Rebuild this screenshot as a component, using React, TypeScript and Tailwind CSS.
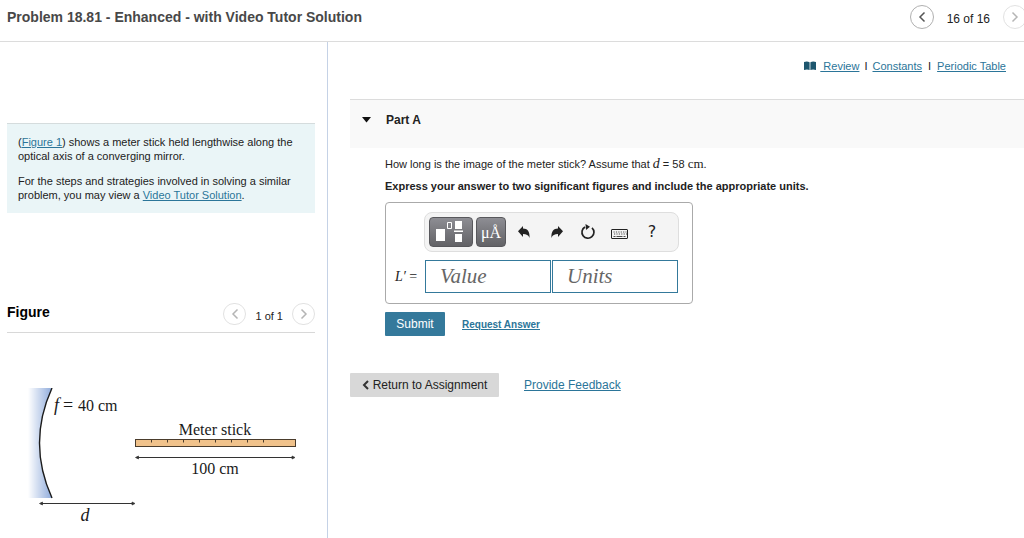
import * as React from "react";
import { clsx } from "clsx";

const SERIF = "font-['Liberation_Serif',serif]";
const LINK = "text-[#2b7599] underline underline-offset-1";

interface PagerProps {
  label: string;
  small?: boolean;
  prevDisabled?: boolean;
  className?: string;
}

interface RoundButtonProps {
  direction: "prev" | "next";
  label: string;
  small?: boolean;
  disabled?: boolean;
}

/** Round arrow button used by both pagers. */
function RoundButton({ direction, label, small, disabled }: RoundButtonProps) {
  return (
    <button
      type="button"
      aria-label={label}
      disabled={disabled}
      className={clsx(
        "flex shrink-0 items-center justify-center rounded-full border bg-white",
        small ? "h-[22px] w-[23px]" : "h-6 w-6",
        disabled ? "border-[#e2e2e2] text-[#b5b5b5]" : "border-[#b0b0b0] text-[#555]",
      )}
    >
      <svg width="8" height="12" viewBox="0 0 8 12" fill="none" stroke="currentColor" strokeWidth="1.5">
        <path d={direction === "prev" ? "M6.500 1.500 2 6l4.500 4.500" : "M1.500 1.500 6 6l-4.500 4.500"} />
      </svg>
    </button>
  );
}

function Pager({ label, small, prevDisabled, className }: PagerProps) {
  return (
    <div
      className={clsx(
        "flex shrink-0 items-center text-[#222]",
        small ? "text-[11px] leading-4" : "text-xs",
        className,
      )}
    >
      <RoundButton direction="prev" label="Previous" small={small} disabled={prevDisabled} />
      <span className="pt-1 whitespace-nowrap">{label}</span>
      <RoundButton direction="next" label="Next" small={small} disabled />
    </div>
  );
}

function BookIcon() {
  return (
    <svg width="12" height="10" viewBox="0 0 12 10" className="fill-[#1d566e]" aria-hidden="true">
      <path d="M0 1c2-.8 4-.7 5.600.2V9C4 8.200 2 8.200 0 9zM12 1c-2-.8-4-.7-5.600.2V9C8 8.200 10 8.200 12 9z" />
    </svg>
  );
}

/** Concave mirror, meter stick and the two dimension arrows. */
function MirrorFigure() {
  const ticks = [150, 166, 182, 198, 214, 230, 246, 262];
  return (
    <svg viewBox="0 0 308 140" className="w-full" role="img" aria-label="Converging mirror and meter stick">
      <defs>
        <linearGradient id="mirror" x1="0" x2="1" y1="0" y2="0">
          <stop offset="0" stopColor="#fff" />
          <stop offset="1" stopColor="#8fabdb" />
        </linearGradient>
      </defs>
      <path d="M21 0H45Q20 55 45 110H21Z" fill="url(#mirror)" />
      <path d="M45 0Q20 55 45 110" fill="none" stroke="#1c1c1c" strokeWidth="1.4" />

      <rect x="128.500" y="51.500" width="160" height="7" fill="#f0c28b" stroke="#4a3c2c" />
      {ticks.map((x) => (
        <path key={x} d={`M${x - 5.5} 52v2.500`} stroke="#4a3c2c" />
      ))}

      <g stroke="#333" fill="#333">
        <path d="M131 69.500H286M35 115.500H126" />
        <path
          d="M128.500 69.500l3-1.500v3zM288 69.500l-3-1.500v3zM32.500 115.500l3-1.500v3zM128 115.500l-3-1.500v3z"
          strokeWidth="0.700"
        />
      </g>

      <g className={clsx(SERIF, "fill-[#1a1a1a] text-[16px]")}>
        <text x="47" y="23" fontStyle="italic" className="text-[18px]">f</text>
        <text x="56" y="23" className="text-[18px]">=</text>
        <text x="71" y="23">40 cm</text>
        <text x="208" y="47" textAnchor="middle">Meter stick</text>
        <text x="208" y="86" textAnchor="middle">100 cm</text>
        <text x="78" y="133" textAnchor="middle" fontStyle="italic" className="text-[18px]">d</text>
      </g>
    </svg>
  );
}

function LeftPane() {
  return (
    <aside className="flex w-[328px] shrink-0 flex-col border-r border-[#c5d2e6] pt-[81px] pr-3 pl-[7px]">
      <section className="space-y-[11px] border-t border-[#d5dcdd] bg-[#eaf5f7] py-[11px] pr-2 pl-[11px] text-[11px] leading-[14px]">
        <p>
          (<a href="#figure" className={LINK}>Figure 1</a>) shows a meter stick held lengthwise along the
          optical axis of a converging mirror.
        </p>
        <p>
          For the steps and strategies involved in solving a similar problem, you may view a{" "}
          <a href="#video" className={LINK}>Video Tutor Solution</a>.
        </p>
      </section>

      <section id="figure" className="pt-[89px]">
        <div className="flex items-center justify-between border-b border-[#d8d8d8] pb-[6px]">
          <h2 className="pb-1 text-sm leading-5 font-bold text-black">Figure</h2>
          <Pager label="1 of 1" small prevDisabled className="gap-[9px]" />
        </div>
        <div className="pt-[55px]">
          <MirrorFigure />
        </div>
      </section>
    </aside>
  );
}

const TOOL = "flex h-8 w-8 items-center justify-center text-[#222]";
const DARK_TOOL =
  "flex h-[30px] items-center justify-center rounded-[4px] border border-[#58585c] bg-linear-to-b from-[#8e8e94] to-[#626266] text-white";

function Toolbar() {
  return (
    <div className="flex h-10 w-[255px] items-center rounded-lg border border-[#dedede] bg-[#f4f4f4] pl-1">
      <button type="button" aria-label="Templates" className={clsx(DARK_TOOL, "w-11")}>
        <svg width="30" height="22" viewBox="0 0 30 22" fill="#fff">
          <path d="M0 8h9v12H0zM19 0h7v8h-7zM18 9.500h9v1.500h-9zM19 13h7v8h-7z" />
          <path d="M11.500 1.500h4v6h-4z" fill="none" stroke="#fff" />
        </svg>
      </button>
      <button
        type="button"
        aria-label="Units"
        className={clsx(DARK_TOOL, SERIF, "ml-[3px] w-[30px] pt-0.5 text-base")}
      >
        μÅ
      </button>
      <div className="ml-0.5 flex">
        <button type="button" aria-label="Undo" className={TOOL}>
          <svg width="12" height="12" viewBox="0 0 12 12" fill="currentColor">
            <path d="M5 0v2.500c4.500 0 7 3 6.500 9.500C10.500 9 8.500 8 5 8v3L0 5.200z" />
          </svg>
        </button>
        <button type="button" aria-label="Redo" className={clsx(TOOL, "pl-0.5")}>
          <svg width="12" height="12" viewBox="0 0 12 12" fill="currentColor">
            <path d="M7 0v2.500C2.500 2.500 0 5.500.500 12 1.500 9 3.500 8 7 8v3l5-5.800z" />
          </svg>
        </button>
        <button type="button" aria-label="Reset" className={TOOL}>
          <svg width="16" height="16" viewBox="0 0 16 16">
            <path d="M12 3.800A6 6 0 1 1 5 3" fill="none" stroke="currentColor" strokeWidth="1.700" />
            <path d="M5.500 0l4.500 2.800L6 6z" fill="currentColor" />
          </svg>
        </button>
        <button type="button" aria-label="Keyboard shortcuts" className={clsx(TOOL, "pt-1")}>
          <svg width="18" height="12" viewBox="0 0 18 12" fill="none" stroke="currentColor">
            <rect x="0.500" y="1.500" width="16" height="9" rx="0.500" />
            <path d="M2.500 4h13M3 6h13" strokeWidth="0.800" strokeDasharray="1.200 1.200" />
            <path d="M2.500 8.500h2M5.500 8.500h6M12.500 8.500h2" strokeWidth="0.800" />
          </svg>
        </button>
        <button type="button" aria-label="Help" className={clsx(TOOL, "font-['DejaVu_Sans',sans-serif] text-base")}>
          ?
        </button>
      </div>
    </div>
  );
}

const FIELD =
  "h-[33px] w-[126px] border border-[#34799b] bg-white pl-[14px] text-[21px] italic text-[#333] placeholder:text-[#666] focus:outline-none";

function AnswerBox() {
  return (
    <div className="w-[308px] rounded-[4px] border border-[#aaa] pt-[9px] pb-[10px] pl-[9px]">
      <div className="pl-[29px]">
        <Toolbar />
      </div>
      <div className={clsx("mt-2 flex items-center", SERIF)}>
        <label htmlFor="value" className="w-[30px] shrink-0 text-sm whitespace-nowrap">
          <i>L′</i> =
        </label>
        <input id="value" type="text" placeholder="Value" className={FIELD} />
        <input type="text" aria-label="Units" placeholder="Units" className={clsx(FIELD, "ml-px")} />
      </div>
    </div>
  );
}

function RightPane() {
  return (
    <main className="min-w-0 flex-1 pl-[22px]">
      <nav className="flex items-center justify-end pt-4 pr-[18px] text-[11px] leading-4">
        <BookIcon />
        <a href="#review" className={clsx(LINK, "ml-1 whitespace-pre")}> Review</a>
        <span className="mx-[5px]">I</span>
        <a href="#constants" className={LINK}>Constants</a>
        <span className="mx-[6px]">I</span>
        <a href="#periodic-table" className={LINK}>Periodic Table</a>
      </nav>

      <section className="mt-[25px]">
        <div className="border-t border-[#dcdcdc] bg-[#f9f9f9] pt-3 pb-5 pl-3">
          <button type="button" aria-expanded="true" className="flex items-center gap-[15px] text-xs font-bold">
            <svg width="9" height="6" viewBox="0 0 9 6" aria-hidden="true">
              <path d="M0 0h9L4.500 5.500z" fill="#111" />
            </svg>
            Part A
          </button>
        </div>

        <div className="pl-[35px] text-[11px]">
          <p className="pt-2 leading-4">
            How long is the image of the meter stick? Assume that{" "}
            <i className={clsx(SERIF, "text-sm leading-4")}>d</i> = 58{" "}
            <span className={clsx(SERIF, "text-[13px] leading-4")}>cm</span>.
          </p>
          <p className="pt-1.5 pb-2 leading-4 font-bold">
            Express your answer to two significant figures and include the appropriate units.
          </p>
          <AnswerBox />
          <div className="flex items-center gap-[17px] pt-2">
            <button type="button" className="h-6 w-[60px] rounded-[1px] bg-[#34799b] text-xs text-white">
              Submit
            </button>
            <a href="#answer" className={clsx(LINK, "text-[10px] font-bold")}>Request Answer</a>
          </div>
        </div>
      </section>

      <div className="flex items-center gap-[25px] pt-[37px] text-xs">
        <button
          type="button"
          className="flex h-6 w-[149px] items-center justify-center gap-1 rounded-[1px] bg-[#d8d8d8] whitespace-nowrap"
        >
          <svg width="7" height="10" viewBox="0 0 7 10" fill="none" stroke="#333" strokeWidth="2" aria-hidden="true">
            <path d="M6 1 2 5l4 4" />
          </svg>
          Return to Assignment
        </button>
        <a href="#feedback" className={LINK}>Provide Feedback</a>
      </div>
    </main>
  );
}

export default function App() {
  return (
    <div className="flex min-h-screen flex-col overflow-x-hidden bg-white font-['Liberation_Sans',Arial,sans-serif] text-[#222]">
      <header className="flex h-[42px] shrink-0 items-center justify-between border-b border-[#dcdcdc] pb-[7px] pl-[7px]">
        <h1 className="text-sm font-bold text-[#484848]">
          Problem 18.81 - Enhanced - with Video Tutor Solution
        </h1>
        <Pager label="16 of 16" className="-mr-[3px] gap-[13px]" />
      </header>
      <div className="flex flex-1">
        <LeftPane />
        <RightPane />
      </div>
    </div>
  );
}
